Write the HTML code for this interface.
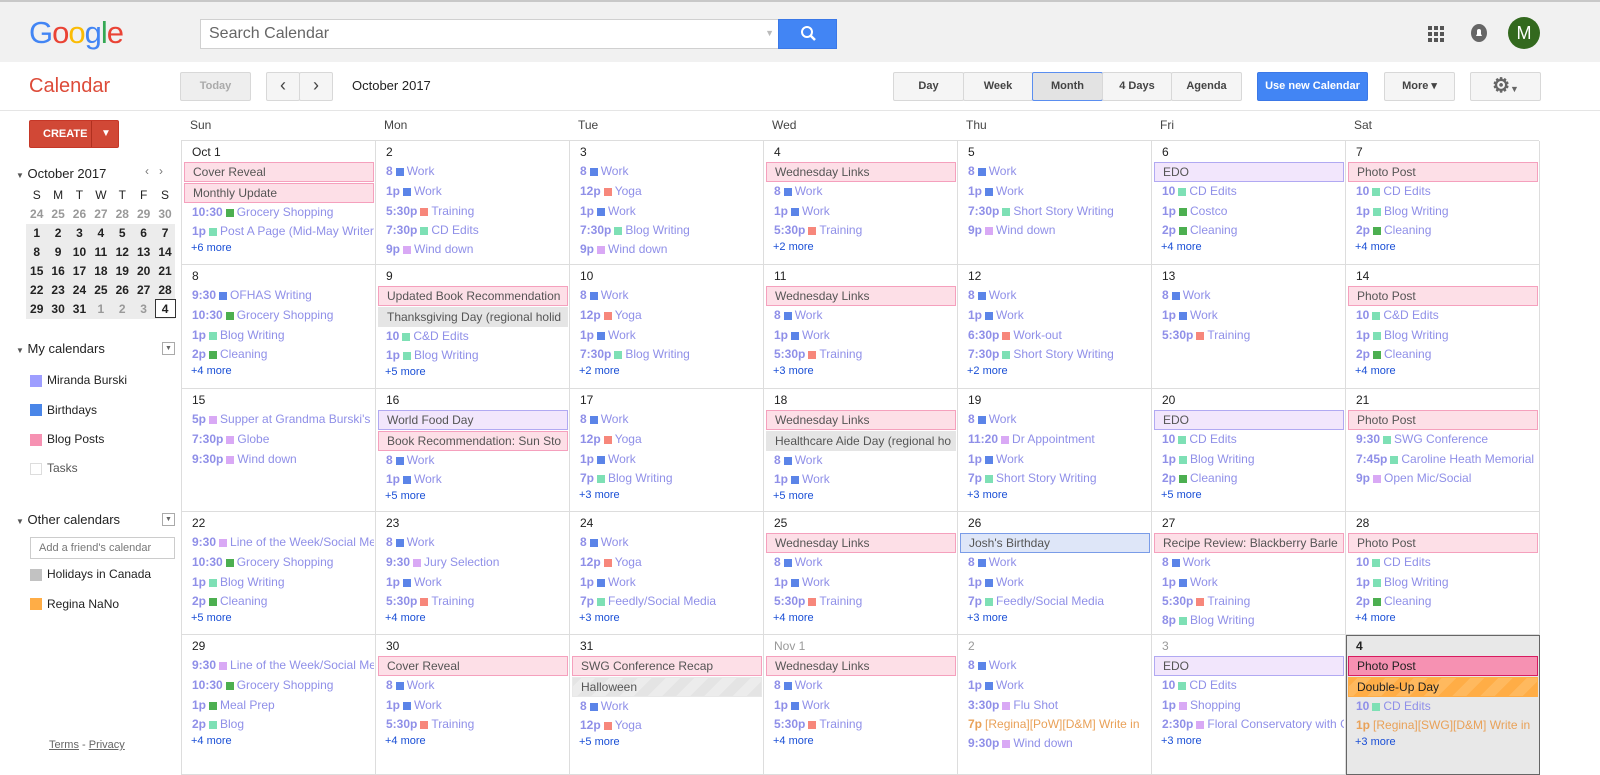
<!DOCTYPE html>
<html><head><meta charset="utf-8"><style>
*{box-sizing:border-box;margin:0;padding:0}
body{width:1600px;height:772px;overflow:hidden;background:#fff;font-family:"Liberation Sans",Arial,sans-serif;font-size:12px;color:#222;position:relative}
.a{position:absolute}
#top{left:0;top:0;width:1600px;height:62px;background:#f1f1f1;border-top:2px solid #c8c8c8}
.btn{position:absolute;border:1px solid #d8d8d8;background:#f5f5f5;font-size:11px;font-weight:bold;color:#444;text-align:center;line-height:26px;height:29px;border-radius:2px}
#grid{left:181px;top:140px;width:1358px;display:grid;grid-template-columns:repeat(7,194px);grid-template-rows:124px 124px 123px 123px 140px;border-left:1px solid #ddd;border-top:1px solid #ddd}
.d{border-right:1px solid #ddd;border-bottom:1px solid #ddd;padding:3px 1px 0 2px;overflow:hidden;white-space:nowrap;position:relative}
.n{height:18px;line-height:16px;padding-left:8px;font-size:12px;color:#222}
.g{color:#999}
.e{height:19px;line-height:19px;padding-left:8px;color:#8f8fe8;font-size:12px;overflow:hidden}
.n+.e,.n+.e+.e,.n+.c+.e{height:20px}
.e b{font-weight:bold;margin-right:3px}
.s{display:inline-block;width:8px;height:8px;margin-right:3px;vertical-align:-1px}
.bl{background:#5b84e8}.rd{background:#f7877b}.gr{background:#4caf50}.mt{background:#7ee0b5}.lv{background:#d9a9f5}
.c{height:20px;line-height:18px;padding-left:8px;color:#555;border:1px solid #f5a0bd;background:#fddfe7;margin-bottom:0;font-size:12px;overflow:hidden}
.c+.c{margin-top:1px}
.pu{background:#f2e6fc;border-color:#b1a9f2}
.bd{background:#dee6f8;border-color:#7a9ce8}
.gy{background:#e5e5e5;border-color:#e5e5e5}
.st{background:repeating-linear-gradient(-45deg,#e4e4e4 0 10px,#ececec 10px 20px);border-color:#e8e8e8}
.m{height:14px;line-height:14px;padding-left:7px;color:#1a4fd6;font-size:11px}
.o{color:#e9a158}
.today{background:#e8e8e8;outline:1px solid #666;outline-offset:-1px}
.mc{position:absolute;width:19px;text-align:center;font-size:12px;font-weight:bold}
.side{position:absolute;font-size:12px;color:#222}
.sq{position:absolute;width:12px;height:12px}
</style></head><body>
<div id="top" class="a">
 <div class="a" style="left:29px;top:13px;font-size:31px;font-family:'Liberation Sans',sans-serif;letter-spacing:-1px"><span style="color:#4285f4">G</span><span style="color:#ea4335">o</span><span style="color:#fbbc05">o</span><span style="color:#4285f4">g</span><span style="color:#34a853">l</span><span style="color:#ea4335">e</span></div>
 <div class="a" style="left:200px;top:17px;width:579px;height:30px;background:#fff;border:1px solid #d0d0d0;padding-left:8px;line-height:27px;font-size:16px;color:#666">Search Calendar<span style="position:absolute;right:4px;top:0;font-size:9px;color:#bbb">▼</span></div>
 <div class="a" style="left:778px;top:17px;width:59px;height:30px;background:#4285f4;border:1px solid #3b78e7">
  <svg width="59" height="28" viewBox="0 0 59 28"><circle cx="28" cy="12" r="5" fill="none" stroke="#fff" stroke-width="2"/><line x1="31.5" y1="15.5" x2="36" y2="20" stroke="#fff" stroke-width="2.5"/></svg></div>
 <svg class="a" style="left:1428px;top:24px" width="16" height="16"><g fill="#555"><rect x="0" y="0" width="4" height="4"/><rect x="6" y="0" width="4" height="4"/><rect x="12" y="0" width="4" height="4"/><rect x="0" y="6" width="4" height="4"/><rect x="6" y="6" width="4" height="4"/><rect x="12" y="6" width="4" height="4"/><rect x="0" y="12" width="4" height="4"/><rect x="6" y="12" width="4" height="4"/><rect x="12" y="12" width="4" height="4"/></g></svg>
 <svg class="a" style="left:1470px;top:21px" width="18" height="20"><ellipse cx="9" cy="10" rx="8" ry="9" fill="#666"/><path d="M6 13h6l-1-2V8a2 2 0 0 0-4 0v3z" fill="#fff"/></svg>
 <div class="a" style="left:1508px;top:15px;width:32px;height:32px;border-radius:50%;background:#33691e;color:#fff;font-size:18px;text-align:center;line-height:32px">M</div>
</div>
<div class="a" style="left:0;top:110px;width:1600px;height:1px;background:#e5e5e5"></div>
<div class="a" style="left:29px;top:75px;font-size:20px;color:#dd4b39">Calendar</div>
<div class="btn" style="left:180px;top:72px;width:71px;color:#aaa;background:#eee">Today</div>
<div class="btn" style="left:266px;top:72px;width:34px;font-size:18px;font-weight:normal;line-height:24px">‹</div>
<div class="btn" style="left:299px;top:72px;width:34px;font-size:18px;font-weight:normal;line-height:24px">›</div>
<div class="a" style="left:352px;top:78px;font-size:13px">October 2017</div>
<div class="btn" style="left:893px;top:72px;width:71px;font-weight:bold">Day</div>
<div class="btn" style="left:963px;top:72px;width:70px">Week</div>
<div class="btn" style="left:1032px;top:72px;width:71px;background:#e3e3e3;border-color:#5a8ef0">Month</div>
<div class="btn" style="left:1102px;top:72px;width:70px">4 Days</div>
<div class="btn" style="left:1171px;top:72px;width:71px">Agenda</div>
<div class="btn" style="left:1257px;top:72px;width:111px;background:#4285f4;border-color:#3b78e7;color:#fff">Use new Calendar</div>
<div class="btn" style="left:1384px;top:72px;width:71px">More ▾</div>
<div class="btn" style="left:1470px;top:72px;width:71px;font-size:20px;color:#666;line-height:26px">⚙<span style="font-size:9px">▼</span></div>

<div class="a" style="left:29px;top:120px;width:90px;height:28px;background:#d14836;border:1px solid #c53727;border-radius:2px;color:#fff;font-size:11px;font-weight:bold;line-height:26px"><span style="padding-left:13px">CREATE</span><span style="position:absolute;left:61px;top:0;height:26px;border-left:1px solid #b0301f;padding-left:9px;font-size:10px">▼</span></div>
<div class="side" style="left:16px;top:166px;font-size:13px"><span style="font-size:8px;color:#555">▼</span> October 2017</div>
<div class="side" style="left:145px;top:164px;color:#777">‹ &nbsp; ›</div>
<div class="a" style="left:26px;top:224px;width:149px;height:95px;background:#ececec"></div>
<div class="a" style="left:155px;top:299px;width:21px;height:19px;border:1px solid #333;background:#fff"></div>
<div id="mini"></div>
<div class="a" style="left:26px;top:186px;width:150px;font-size:12px">
<div style="display:grid;grid-template-columns:repeat(7,21.4px);grid-auto-rows:19px;text-align:center;line-height:19px">
<span>S</span><span>M</span><span>T</span><span>W</span><span>T</span><span>F</span><span>S</span>
<b style="color:#999">24</b><b style="color:#999">25</b><b style="color:#999">26</b><b style="color:#999">27</b><b style="color:#999">28</b><b style="color:#999">29</b><b style="color:#999">30</b>
<b>1</b><b>2</b><b>3</b><b>4</b><b>5</b><b>6</b><b>7</b>
<b>8</b><b>9</b><b>10</b><b>11</b><b>12</b><b>13</b><b>14</b>
<b>15</b><b>16</b><b>17</b><b>18</b><b>19</b><b>20</b><b>21</b>
<b>22</b><b>23</b><b>24</b><b>25</b><b>26</b><b>27</b><b>28</b>
<b>29</b><b>30</b><b>31</b><b style="color:#999">1</b><b style="color:#999">2</b><b style="color:#999">3</b><b>4</b>
</div></div>
<div class="side" style="left:16px;top:341px;font-size:13px"><span style="font-size:8px;color:#555">▼</span> My calendars</div>
<div class="a" style="left:162px;top:342px;width:13px;height:13px;border:1px solid #aaa;font-size:7px;text-align:center;color:#666;line-height:11px">▼</div>
<div class="sq" style="left:30px;top:375px;background:#9e9eff"></div><div class="side" style="left:47px;top:373px">Miranda Burski</div>
<div class="sq" style="left:30px;top:404px;background:#4a86e8"></div><div class="side" style="left:47px;top:403px">Birthdays</div>
<div class="sq" style="left:30px;top:434px;background:#f691b2"></div><div class="side" style="left:47px;top:432px">Blog Posts</div>
<div class="sq" style="left:30px;top:463px;border:1px solid #ddd"></div><div class="side" style="left:47px;top:461px;color:#555">Tasks</div>
<div class="side" style="left:16px;top:512px;font-size:13px"><span style="font-size:8px;color:#555">▼</span> Other calendars</div>
<div class="a" style="left:162px;top:513px;width:13px;height:13px;border:1px solid #aaa;font-size:7px;text-align:center;color:#666;line-height:11px">▼</div>
<div class="a" style="left:30px;top:537px;width:145px;height:22px;border:1px solid #ccc;font-size:11px;color:#777;padding-left:8px;line-height:20px">Add a friend's calendar</div>
<div class="sq" style="left:30px;top:569px;background:#c2c2c2"></div><div class="side" style="left:47px;top:567px">Holidays in Canada</div>
<div class="sq" style="left:30px;top:598px;background:#ffad46"></div><div class="side" style="left:47px;top:597px">Regina NaNo</div>
<div class="side" style="left:49px;top:739px;font-size:11px;color:#666"><u>Terms</u> - <u>Privacy</u></div>

<div class="a" style="left:181px;top:118px;width:1358px;display:grid;grid-template-columns:repeat(7,194px);font-size:12px;color:#444">
<div style="padding-left:9px">Sun</div><div style="padding-left:9px">Mon</div><div style="padding-left:9px">Tue</div><div style="padding-left:9px">Wed</div><div style="padding-left:9px">Thu</div><div style="padding-left:9px">Fri</div><div style="padding-left:9px">Sat</div></div>

<div id="grid" class="a">
<!-- row1 -->
<div class="d"><div class="n">Oct 1</div><div class="c">Cover Reveal</div><div class="c">Monthly Update</div><div class="e"><b>10:30</b><i class="s gr"></i>Grocery Shopping</div><div class="e"><b>1p</b><i class="s mt"></i>Post A Page (Mid-May Writers</div><div class="m">+6 more</div></div>
<div class="d"><div class="n">2</div><div class="e"><b>8</b><i class="s bl"></i>Work</div><div class="e"><b>1p</b><i class="s bl"></i>Work</div><div class="e"><b>5:30p</b><i class="s rd"></i>Training</div><div class="e"><b>7:30p</b><i class="s mt"></i>CD Edits</div><div class="e"><b>9p</b><i class="s lv"></i>Wind down</div></div>
<div class="d"><div class="n">3</div><div class="e"><b>8</b><i class="s bl"></i>Work</div><div class="e"><b>12p</b><i class="s rd"></i>Yoga</div><div class="e"><b>1p</b><i class="s bl"></i>Work</div><div class="e"><b>7:30p</b><i class="s mt"></i>Blog Writing</div><div class="e"><b>9p</b><i class="s lv"></i>Wind down</div></div>
<div class="d"><div class="n">4</div><div class="c">Wednesday Links</div><div class="e"><b>8</b><i class="s bl"></i>Work</div><div class="e"><b>1p</b><i class="s bl"></i>Work</div><div class="e"><b>5:30p</b><i class="s rd"></i>Training</div><div class="m">+2 more</div></div>
<div class="d"><div class="n">5</div><div class="e"><b>8</b><i class="s bl"></i>Work</div><div class="e"><b>1p</b><i class="s bl"></i>Work</div><div class="e"><b>7:30p</b><i class="s mt"></i>Short Story Writing</div><div class="e"><b>9p</b><i class="s lv"></i>Wind down</div></div>
<div class="d"><div class="n">6</div><div class="c pu">EDO</div><div class="e"><b>10</b><i class="s mt"></i>CD Edits</div><div class="e"><b>1p</b><i class="s gr"></i>Costco</div><div class="e"><b>2p</b><i class="s gr"></i>Cleaning</div><div class="m">+4 more</div></div>
<div class="d"><div class="n">7</div><div class="c">Photo Post</div><div class="e"><b>10</b><i class="s mt"></i>CD Edits</div><div class="e"><b>1p</b><i class="s mt"></i>Blog Writing</div><div class="e"><b>2p</b><i class="s gr"></i>Cleaning</div><div class="m">+4 more</div></div>
<!-- row2 -->
<div class="d"><div class="n">8</div><div class="e"><b>9:30</b><i class="s bl"></i>OFHAS Writing</div><div class="e"><b>10:30</b><i class="s gr"></i>Grocery Shopping</div><div class="e"><b>1p</b><i class="s mt"></i>Blog Writing</div><div class="e"><b>2p</b><i class="s gr"></i>Cleaning</div><div class="m">+4 more</div></div>
<div class="d"><div class="n">9</div><div class="c">Updated Book Recommendation</div><div class="c gy">Thanksgiving Day (regional holid</div><div class="e"><b>10</b><i class="s mt"></i>C&amp;D Edits</div><div class="e"><b>1p</b><i class="s mt"></i>Blog Writing</div><div class="m">+5 more</div></div>
<div class="d"><div class="n">10</div><div class="e"><b>8</b><i class="s bl"></i>Work</div><div class="e"><b>12p</b><i class="s rd"></i>Yoga</div><div class="e"><b>1p</b><i class="s bl"></i>Work</div><div class="e"><b>7:30p</b><i class="s mt"></i>Blog Writing</div><div class="m">+2 more</div></div>
<div class="d"><div class="n">11</div><div class="c">Wednesday Links</div><div class="e"><b>8</b><i class="s bl"></i>Work</div><div class="e"><b>1p</b><i class="s bl"></i>Work</div><div class="e"><b>5:30p</b><i class="s rd"></i>Training</div><div class="m">+3 more</div></div>
<div class="d"><div class="n">12</div><div class="e"><b>8</b><i class="s bl"></i>Work</div><div class="e"><b>1p</b><i class="s bl"></i>Work</div><div class="e"><b>6:30p</b><i class="s rd"></i>Work-out</div><div class="e"><b>7:30p</b><i class="s mt"></i>Short Story Writing</div><div class="m">+2 more</div></div>
<div class="d"><div class="n">13</div><div class="e"><b>8</b><i class="s bl"></i>Work</div><div class="e"><b>1p</b><i class="s bl"></i>Work</div><div class="e"><b>5:30p</b><i class="s rd"></i>Training</div></div>
<div class="d"><div class="n">14</div><div class="c">Photo Post</div><div class="e"><b>10</b><i class="s mt"></i>C&amp;D Edits</div><div class="e"><b>1p</b><i class="s mt"></i>Blog Writing</div><div class="e"><b>2p</b><i class="s gr"></i>Cleaning</div><div class="m">+4 more</div></div>
<!-- row3 -->
<div class="d"><div class="n">15</div><div class="e"><b>5p</b><i class="s lv"></i>Supper at Grandma Burski's</div><div class="e"><b>7:30p</b><i class="s lv"></i>Globe</div><div class="e"><b>9:30p</b><i class="s lv"></i>Wind down</div></div>
<div class="d"><div class="n">16</div><div class="c pu">World Food Day</div><div class="c">Book Recommendation: Sun Sto</div><div class="e"><b>8</b><i class="s bl"></i>Work</div><div class="e"><b>1p</b><i class="s bl"></i>Work</div><div class="m">+5 more</div></div>
<div class="d"><div class="n">17</div><div class="e"><b>8</b><i class="s bl"></i>Work</div><div class="e"><b>12p</b><i class="s rd"></i>Yoga</div><div class="e"><b>1p</b><i class="s bl"></i>Work</div><div class="e"><b>7p</b><i class="s mt"></i>Blog Writing</div><div class="m">+3 more</div></div>
<div class="d"><div class="n">18</div><div class="c">Wednesday Links</div><div class="c gy">Healthcare Aide Day (regional ho</div><div class="e"><b>8</b><i class="s bl"></i>Work</div><div class="e"><b>1p</b><i class="s bl"></i>Work</div><div class="m">+5 more</div></div>
<div class="d"><div class="n">19</div><div class="e"><b>8</b><i class="s bl"></i>Work</div><div class="e"><b>11:20</b><i class="s lv"></i>Dr Appointment</div><div class="e"><b>1p</b><i class="s bl"></i>Work</div><div class="e"><b>7p</b><i class="s mt"></i>Short Story Writing</div><div class="m">+3 more</div></div>
<div class="d"><div class="n">20</div><div class="c pu">EDO</div><div class="e"><b>10</b><i class="s mt"></i>CD Edits</div><div class="e"><b>1p</b><i class="s mt"></i>Blog Writing</div><div class="e"><b>2p</b><i class="s gr"></i>Cleaning</div><div class="m">+5 more</div></div>
<div class="d"><div class="n">21</div><div class="c">Photo Post</div><div class="e"><b>9:30</b><i class="s mt"></i>SWG Conference</div><div class="e"><b>7:45p</b><i class="s mt"></i>Caroline Heath Memorial L</div><div class="e"><b>9p</b><i class="s lv"></i>Open Mic/Social</div></div>
<!-- row4 -->
<div class="d"><div class="n">22</div><div class="e"><b>9:30</b><i class="s lv"></i>Line of the Week/Social Me</div><div class="e"><b>10:30</b><i class="s gr"></i>Grocery Shopping</div><div class="e"><b>1p</b><i class="s mt"></i>Blog Writing</div><div class="e"><b>2p</b><i class="s gr"></i>Cleaning</div><div class="m">+5 more</div></div>
<div class="d"><div class="n">23</div><div class="e"><b>8</b><i class="s bl"></i>Work</div><div class="e"><b>9:30</b><i class="s lv"></i>Jury Selection</div><div class="e"><b>1p</b><i class="s bl"></i>Work</div><div class="e"><b>5:30p</b><i class="s rd"></i>Training</div><div class="m">+4 more</div></div>
<div class="d"><div class="n">24</div><div class="e"><b>8</b><i class="s bl"></i>Work</div><div class="e"><b>12p</b><i class="s rd"></i>Yoga</div><div class="e"><b>1p</b><i class="s bl"></i>Work</div><div class="e"><b>7p</b><i class="s mt"></i>Feedly/Social Media</div><div class="m">+3 more</div></div>
<div class="d"><div class="n">25</div><div class="c">Wednesday Links</div><div class="e"><b>8</b><i class="s bl"></i>Work</div><div class="e"><b>1p</b><i class="s bl"></i>Work</div><div class="e"><b>5:30p</b><i class="s rd"></i>Training</div><div class="m">+4 more</div></div>
<div class="d"><div class="n">26</div><div class="c bd">Josh's Birthday</div><div class="e"><b>8</b><i class="s bl"></i>Work</div><div class="e"><b>1p</b><i class="s bl"></i>Work</div><div class="e"><b>7p</b><i class="s mt"></i>Feedly/Social Media</div><div class="m">+3 more</div></div>
<div class="d"><div class="n">27</div><div class="c">Recipe Review: Blackberry Barle</div><div class="e"><b>8</b><i class="s bl"></i>Work</div><div class="e"><b>1p</b><i class="s bl"></i>Work</div><div class="e"><b>5:30p</b><i class="s rd"></i>Training</div><div class="e"><b>8p</b><i class="s mt"></i>Blog Writing</div></div>
<div class="d"><div class="n">28</div><div class="c">Photo Post</div><div class="e"><b>10</b><i class="s mt"></i>CD Edits</div><div class="e"><b>1p</b><i class="s mt"></i>Blog Writing</div><div class="e"><b>2p</b><i class="s gr"></i>Cleaning</div><div class="m">+4 more</div></div>
<!-- row5 -->
<div class="d"><div class="n">29</div><div class="e"><b>9:30</b><i class="s lv"></i>Line of the Week/Social Me</div><div class="e"><b>10:30</b><i class="s gr"></i>Grocery Shopping</div><div class="e"><b>1p</b><i class="s gr"></i>Meal Prep</div><div class="e"><b>2p</b><i class="s mt"></i>Blog</div><div class="m">+4 more</div></div>
<div class="d"><div class="n">30</div><div class="c">Cover Reveal</div><div class="e"><b>8</b><i class="s bl"></i>Work</div><div class="e"><b>1p</b><i class="s bl"></i>Work</div><div class="e"><b>5:30p</b><i class="s rd"></i>Training</div><div class="m">+4 more</div></div>
<div class="d"><div class="n">31</div><div class="c">SWG Conference Recap</div><div class="c st">Halloween</div><div class="e"><b>8</b><i class="s bl"></i>Work</div><div class="e"><b>12p</b><i class="s rd"></i>Yoga</div><div class="m">+5 more</div></div>
<div class="d"><div class="n g">Nov 1</div><div class="c">Wednesday Links</div><div class="e"><b>8</b><i class="s bl"></i>Work</div><div class="e"><b>1p</b><i class="s bl"></i>Work</div><div class="e"><b>5:30p</b><i class="s rd"></i>Training</div><div class="m">+4 more</div></div>
<div class="d"><div class="n g">2</div><div class="e"><b>8</b><i class="s bl"></i>Work</div><div class="e"><b>1p</b><i class="s bl"></i>Work</div><div class="e"><b>3:30p</b><i class="s lv"></i>Flu Shot</div><div class="e o"><b>7p</b>[Regina][PoW][D&amp;M] Write in</div><div class="e"><b>9:30p</b><i class="s lv"></i>Wind down</div></div>
<div class="d"><div class="n g">3</div><div class="c pu">EDO</div><div class="e"><b>10</b><i class="s mt"></i>CD Edits</div><div class="e"><b>1p</b><i class="s lv"></i>Shopping</div><div class="e"><b>2:30p</b><i class="s lv"></i>Floral Conservatory with G</div><div class="m">+3 more</div></div>
<div class="d today"><div class="n" style="font-weight:bold">4</div><div class="c" style="background:#f691b2;border-color:#d81b60;color:#222">Photo Post</div><div class="c" style="background:repeating-linear-gradient(-45deg,#ffad46 0 10px,#ffb95e 10px 20px);border-color:#ffad46;color:#222">Double-Up Day</div><div class="e"><b>10</b><i class="s mt"></i>CD Edits</div><div class="e o"><b>1p</b>[Regina][SWG][D&amp;M] Write in</div><div class="m">+3 more</div></div>
</div>
</body></html>
